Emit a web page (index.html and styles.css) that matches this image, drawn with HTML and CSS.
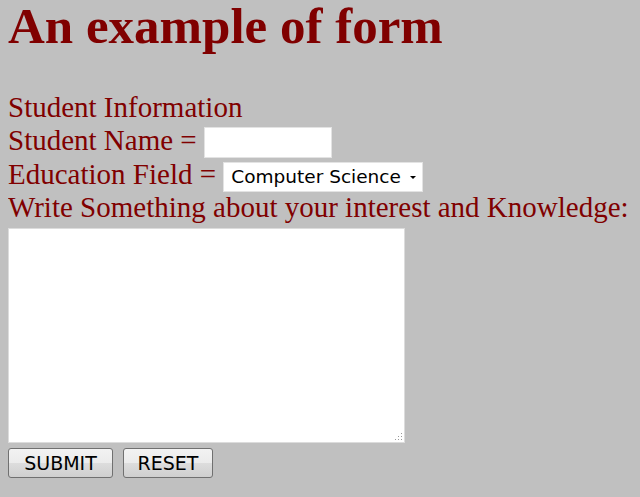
FILE: index.html
```
<!DOCTYPE html>
<html>
<head>
<meta charset="utf-8">
<link rel="stylesheet" href="styles.css">
</head>
<body>
<h1 class="title">An example of form</h1>
<form class="form">
<div class="line">Student Information</div>
<div class="line line-name">Student Name = <input class="field" type="text"></div>
<div class="line">Education Field = <span class="select"><span class="select-text">Computer Science</span><span class="caret"></span></span></div>
<div class="line">Write Something about your interest and Knowledge:</div>
<div class="area"><span class="grip"></span></div>
<div class="buttons"><span class="btn btn-submit">SUBMIT</span><span class="btn btn-reset">RESET</span></div>
</form>
</body>
</html>
```
FILE: styles.css
```
html, body {
  background: #c0c0c0;
}
body {
  margin: 0 8px;
  color: #800000;
  font-family: "Liberation Serif", "Times New Roman", serif;
}
.title {
  font-size: 51px;
  font-weight: bold;
  margin: 0;
  height: 91px;
  line-height: 52px;
  white-space: nowrap;
}
.form {
  font-size: 29px;
}
.line {
  line-height: 33px;
  height: 33px;
  white-space: nowrap;
}
.line-name {
  height: 34px;
}
.field {
  width: 128px;
  height: 31px;
  box-sizing: border-box;
  border: 1px solid #e3e3e3;
  background: #fff;
  vertical-align: top;
  margin: 3px 0 0;
  padding: 0;
}
.select {
  display: inline-flex;
  align-items: center;
  width: 200px;
  height: 30px;
  box-sizing: border-box;
  background: #fff;
  border: 1px solid #e3e3e3;
  vertical-align: top;
  margin-top: 4px;
  color: #000;
  font-family: "DejaVu Sans", sans-serif;
  font-size: 18.5px;
  line-height: 28px;
  padding-left: 7px;
}
.select-text { flex: 1; }
.caret {
  width: 0;
  height: 0;
  border-left: 3px solid transparent;
  border-right: 3px solid transparent;
  border-top: 3px solid #000;
  margin-right: 6px;
}
.area {
  margin-top: 4px;
  width: 397px;
  height: 215px;
  box-sizing: border-box;
  background: #fff;
  border: 1px solid #dcdcdc;
  position: relative;
}
.grip {
  position: absolute;
  right: 2px;
  bottom: 2px;
  width: 8px;
  height: 8px;
  background-image: radial-gradient(circle, #999 0.8px, transparent 1px);
  background-size: 3px 3px;
  clip-path: polygon(100% 0, 100% 100%, 0 100%);
}
.buttons {
  display: flex;
  gap: 10px;
  margin-top: 5px;
}
.btn {
  display: flex;
  align-items: center;
  justify-content: center;
  height: 30px;
  box-sizing: border-box;
  border: 1px solid #707070;
  border-radius: 3px;
  background: linear-gradient(#f2f2f2, #ebebeb 50%, #dddddd 50%, #cfcfcf);
  color: #000;
  font-family: "DejaVu Sans", sans-serif;
  font-size: 19px;
}
.btn-submit { width: 105px; }
.btn-reset { width: 90px; }
```
